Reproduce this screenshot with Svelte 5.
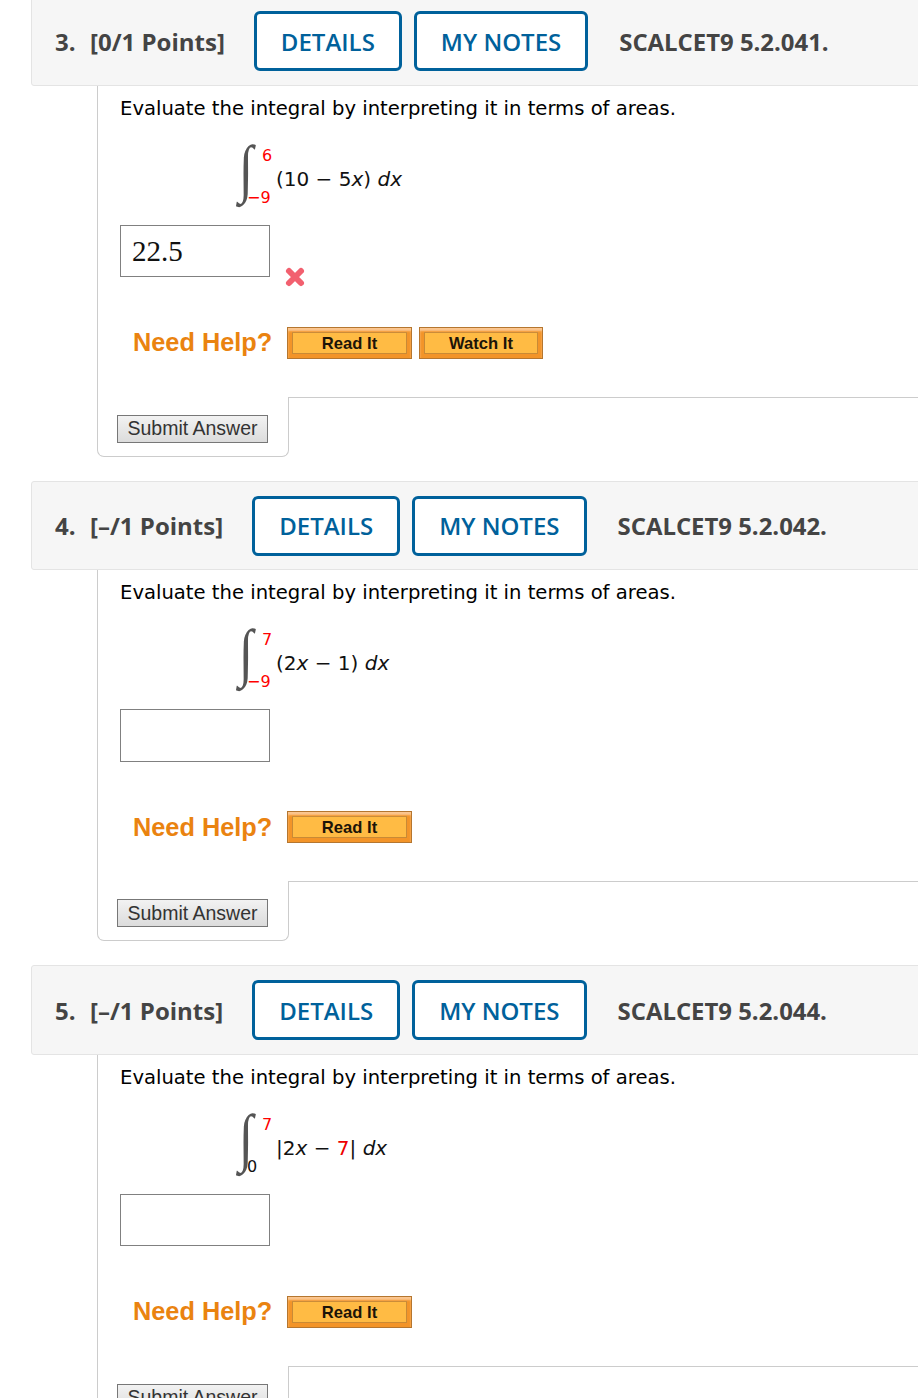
<script>
	const questions = [
		{ num: '3.', points: '[0/1 Points]', code: 'SCALCET9 5.2.041.', upper: '6', lower: '−9', answer: '22.5', wrong: true, watch: true, kind: 'a' },
		{ num: '4.', points: '[–/1 Points]', code: 'SCALCET9 5.2.042.', upper: '7', lower: '−9', answer: '', wrong: false, watch: false, kind: 'b' },
		{ num: '5.', points: '[–/1 Points]', code: 'SCALCET9 5.2.044.', upper: '7', lower: '0', answer: '', wrong: false, watch: false, kind: 'c' }
	];
</script>

<div class="page">
	{#each questions as q}
		<section class="question">
			<header class="head">
				<span class="num">{q.num}</span>
				<span class="points">{q.points}</span>
				<button class="outline details">DETAILS</button>
				<button class="outline">MY NOTES</button>
				<span class="code">{q.code}</span>
			</header>

			<div class="content">
				<p class="prompt">Evaluate the integral by interpreting it in terms of areas.</p>

				<div class="math">
					<span class="sign">∫</span>
					<div class="limits">
						<span class="upper">{q.upper}</span>
						<span class="lower" class:plain={q.lower === '0'}>{q.lower}</span>
					</div>
					<div class="expr">
						{#if q.kind === 'a'}
							(10 − 5<i>x</i>) <i>dx</i>
						{:else if q.kind === 'b'}
							(2<i>x</i> − 1) <i>dx</i>
						{:else}
							|2<i>x</i> − <span class="red">7</span>| <i>dx</i>
						{/if}
					</div>
				</div>

				<div class="answer">
					<input type="text" value={q.answer} readonly />
					{#if q.wrong}
						<svg class="cross" width="22" height="22" viewBox="0 0 22 22">
							<path d="M5 5 L17 17 M17 5 L5 17" stroke="#f2606f" stroke-width="6" stroke-linecap="round" />
						</svg>
					{/if}
				</div>

				<div class="help">
					<span class="need">Need Help?</span>
					<button class="orange">Read It</button>
					{#if q.watch}
						<button class="orange watch">Watch It</button>
					{/if}
				</div>
			</div>

			<div class="foot">
				<div class="submit-cell">
					<button class="submit">Submit Answer</button>
				</div>
				<div class="filler"></div>
			</div>
		</section>
	{/each}
</div>

<style>
	:global(body) {
		margin: 0;
		background: #fff;
	}

	.page {
		height: 1398px;
		overflow: hidden;
		padding-top: 0.1px;
	}

	.question {
		margin-bottom: 24px;
	}

	.question:first-child {
		margin-top: -3.8px;
	}

	.head {
		display: flex;
		align-items: center;
		box-sizing: border-box;
		height: 89.5px;
		margin-left: 31px;
		margin-right: -10px;
		padding-left: 23px;
		background: #f6f6f6;
		border: 1px solid #e4e4e4;
		border-radius: 3px;
		font-family: 'Open Sans', sans-serif;
		font-weight: 700;
		font-size: 23.9px;
		color: #444;
	}

	.num {
		width: 35px;
		font-weight: 700;
		font-size: 24px;
	}

	.points {
		font-weight: 700;
		font-size: 24px;
		margin-right: 29px;
	}

	.outline {
		box-sizing: border-box;
		height: 60px;
		padding: 0 24px;
		margin-right: 12px;
		background: #fff;
		border: 3px solid #00619b;
		border-radius: 6px;
		color: #00619b;
		font-family: 'Open Sans', sans-serif;
		font-weight: 600;
		font-size: 24px;
	}

	.code {
		margin-left: 19px;
		white-space: nowrap;
	}

	.content {
		margin-left: 97px;
		padding-left: 22px;
		padding-bottom: 38px;
		border-left: 1px solid #ccc;
		font-family: 'DejaVu Sans', sans-serif;
		font-size: 20px;
		color: #111;
	}

	.prompt {
		margin: 0;
		padding-top: 10px;
		font-size: 19.6px;
		line-height: 26px;
		color: #000;
	}

	.math {
		display: flex;
		height: 66px;
		margin-top: 24px;
		margin-left: 112px;
	}

	.sign {
		width: 9px;
		margin-left: 6px;
		margin-top: -17px;
		font-family: 'Liberation Serif', serif;
		font-style: italic;
		font-size: 64px;
		line-height: 80px;
		color: #555;
		transform: scaleX(0.82);
	}

	.limits {
		display: flex;
		flex-direction: column;
		justify-content: space-between;
		box-sizing: border-box;
		width: 29px;
		height: 62px;
		font-size: 16px;
		line-height: 20px;
		color: #f00;
	}

	.upper {
		margin-left: 15px;
	}

	.lower.plain {
		color: #111;
	}

	.expr {
		padding-top: 20px;
		line-height: 26px;
		white-space: nowrap;
	}

	.red {
		color: #e00;
	}

	.answer {
		display: flex;
		align-items: flex-end;
		margin-top: 13px;
	}

	input {
		box-sizing: border-box;
		width: 150px;
		height: 52.5px;
		padding: 0 11px;
		border: 1px solid #808080;
		font-family: 'Liberation Serif', serif;
		font-size: 29px;
		color: #111;
		outline: none;
	}

	.cross {
		margin-left: 14px;
		margin-bottom: -11px;
	}

	.help {
		display: flex;
		align-items: center;
		margin-top: 49.5px;
		height: 32px;
	}

	.need {
		width: 167px;
		padding-left: 13px;
		box-sizing: border-box;
		font-family: 'Liberation Sans', sans-serif;
		font-weight: 700;
		font-size: 25.3px;
		color: #ea8310;
		white-space: nowrap;
	}

	.orange {
		box-sizing: border-box;
		width: 125px;
		height: 32px;
		padding: 2px 0 0;
		background: #ffbb44;
		border: 1px solid #b5762f;
		box-shadow: inset 0 3px 2px #fbc690, inset 0 0 0 4px #f39428, inset 0 0 0 5px #c98a35;
		font-family: 'Liberation Sans', sans-serif;
		font-weight: 700;
		font-size: 16.6px;
		color: #1c1408;
	}

	.watch {
		margin-left: 7px;
		width: 124px;
	}

	.foot {
		display: flex;
		margin-left: 97px;
		height: 60px;
	}

	.submit-cell {
		box-sizing: border-box;
		width: 192px;
		padding: 18px 0 0 19px;
		border: 1px solid #ccc;
		border-top: none;
		border-radius: 0 0 7px 7px;
	}

	.filler {
		flex: 1;
		border-top: 1px solid #ccc;
	}

	.submit {
		box-sizing: border-box;
		width: 151px;
		height: 28px;
		padding: 0;
		background: linear-gradient(#f2f2f2, #dcdcdc);
		border: 1px solid #777;
		font-family: 'Liberation Sans', sans-serif;
		font-size: 19.5px;
		color: #333;
	}
</style>
